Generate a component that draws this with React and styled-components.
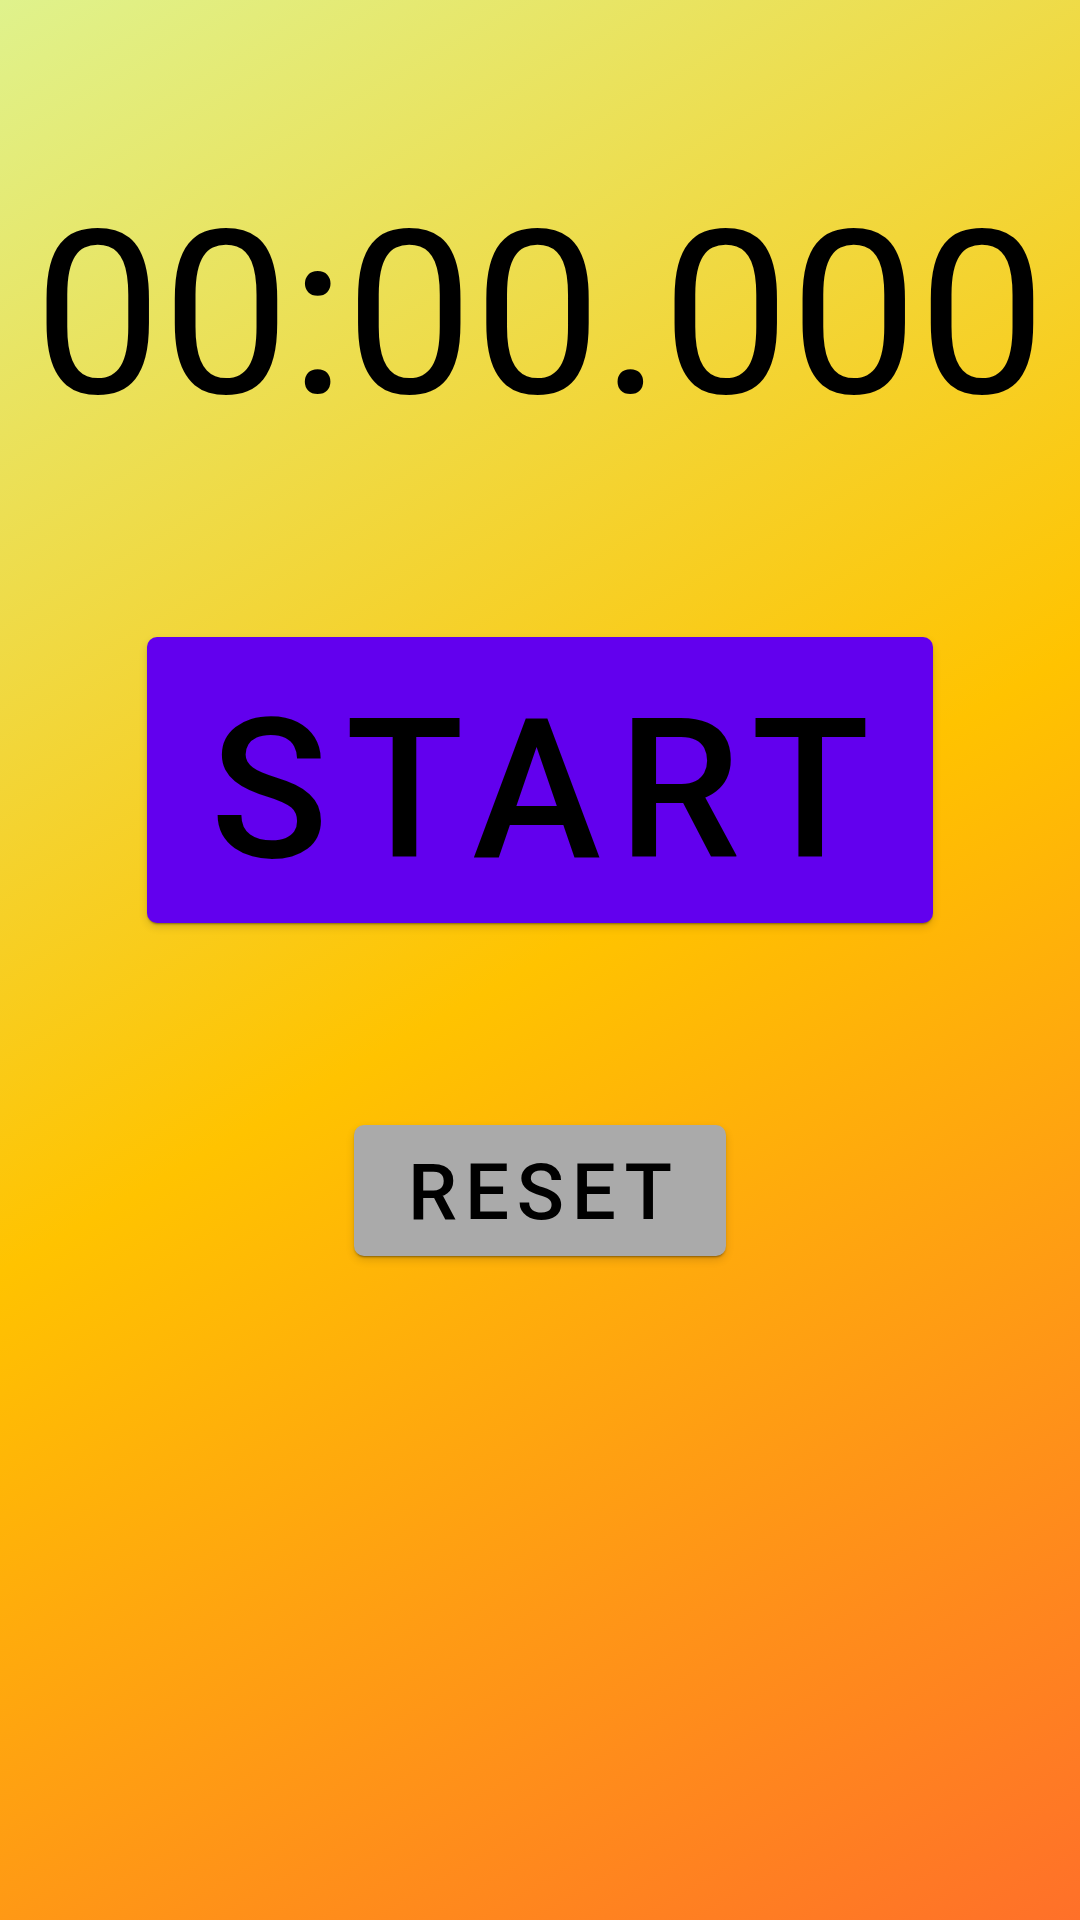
import React from "react";
import styled, { createGlobalStyle } from "styled-components";

const GlobalStyle = createGlobalStyle`
  html, body {
    margin: 0;
    padding: 0;
  }
  body {
    font-family: Roboto, "Noto Sans", "Liberation Sans", sans-serif;
  }
  * { box-sizing: border-box; }
`;

const Screen = styled.main`
  width: 1080px;
  height: 1920px;
  overflow: hidden;
  display: flex;
  flex-direction: column;
  align-items: center;
  padding-top: 201px;
  background: linear-gradient(150deg, #dff28c 0%, #ffc300 50%, #ff7029 100%);
`;

const Timer = styled.div`
  font-family: Roboto, "Liberation Sans", sans-serif;
  font-size: 228px;
  font-weight: 400;
  line-height: 1;
  height: 229px;
  color: #000;
  white-space: nowrap;
  text-align: center;
`;

const ActionButton = styled.button`
  display: flex;
  align-items: center;
  justify-content: center;
  border: none;
  margin: 0;
  cursor: pointer;
  font-family: Roboto, "Liberation Sans", sans-serif;
  line-height: 1;
  color: #000;
  text-transform: uppercase;
  width: ${(p) => p.$w}px;
  height: ${(p) => p.$h}px;
  margin-top: ${(p) => p.$mt}px;
  background: ${(p) => p.$bg};
  font-size: ${(p) => p.$fs}px;
  font-weight: ${(p) => p.$fw};
  letter-spacing: ${(p) => p.$ls}em;
  padding: ${(p) => p.$pt}px 0 0 ${(p) => p.$ls}em;
  border-radius: ${(p) => p.$r}px;
  box-shadow: 0 3px 1px -2px rgba(0, 0, 0, 0.2), 0 2px 2px 0 rgba(0, 0, 0, 0.14),
    0 4px 8px 0 rgba(0, 0, 0, 0.14);
`;

export default function App() {
  return (
    <>
      <GlobalStyle />
      <Screen>
        <Timer>00:00.000</Timer>
        <ActionButton
          $w={786}
          $h={286}
          $mt={207}
          $bg="#6200ee"
          $fs={194}
          $fw={500}
          $ls={0.09}
          $pt={22}
          $r={10}
        >
          Start
        </ActionButton>
        <ActionButton
          $w={372}
          $h={131}
          $mt={202}
          $bg="#aaaaaa"
          $fs={78}
          $fw={500}
          $ls={0.1}
          $pt={5}
          $r={10}
        >
          Reset
        </ActionButton>
      </Screen>
    </>
  );
}
